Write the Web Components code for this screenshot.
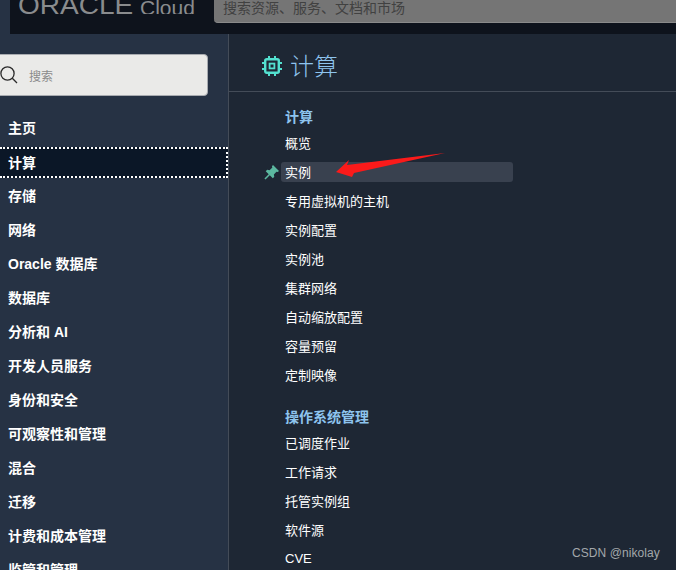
<!DOCTYPE html>
<html lang="zh">
<head>
<meta charset="utf-8">
<title>计算</title>
<style>
  html, body { margin:0; height:100%; overflow:hidden; background:#1e2734; }
  body { font-family:"Liberation Sans","Noto Sans CJK SC",sans-serif; }
</style>
</head>
<body>
<console-shell>
  <top-bar slot="top"></top-bar>
  <side-nav slot="side">
    <nav-row>主页</nav-row>
    <nav-row active>计算</nav-row>
    <nav-row>存储</nav-row>
    <nav-row>网络</nav-row>
    <nav-row>Oracle 数据库</nav-row>
    <nav-row>数据库</nav-row>
    <nav-row>分析和 AI</nav-row>
    <nav-row>开发人员服务</nav-row>
    <nav-row>身份和安全</nav-row>
    <nav-row>可观察性和管理</nav-row>
    <nav-row>混合</nav-row>
    <nav-row>迁移</nav-row>
    <nav-row>计费和成本管理</nav-row>
    <nav-row>监管和管理</nav-row>
  </side-nav>
  <menu-panel slot="main" heading="计算">
    <menu-group title="计算">
      <menu-link>概览</menu-link>
      <menu-link pinned>实例</menu-link>
      <menu-link>专用虚拟机的主机</menu-link>
      <menu-link>实例配置</menu-link>
      <menu-link>实例池</menu-link>
      <menu-link>集群网络</menu-link>
      <menu-link>自动缩放配置</menu-link>
      <menu-link>容量预留</menu-link>
      <menu-link>定制映像</menu-link>
    </menu-group>
    <menu-group title="操作系统管理">
      <menu-link>已调度作业</menu-link>
      <menu-link>工作请求</menu-link>
      <menu-link>托管实例组</menu-link>
      <menu-link>软件源</menu-link>
      <menu-link>CVE</menu-link>
    </menu-group>
  </menu-panel>
  <red-arrow slot="over"></red-arrow>
  <water-mark slot="over">CSDN @nikolay</water-mark>
</console-shell>

<script>
// page frame: top bar over sidebar + main column
class ConsoleShell extends HTMLElement {
  constructor() {
    super();
    this.attachShadow({ mode: 'open' });
    this.shadowRoot.innerHTML = `
      <style>
        :host { display:block; position:relative; width:676px; height:570px; overflow:hidden; background:#1e2734; }
        .top { background:#263244; padding-left:10px; }
        .body { display:flex; height:536px; }
        .side { flex:0 0 228px; width:228px; overflow:hidden; }
        .main { flex:1; min-width:0; border-left:1px solid #444c58; }
      </style>
      <div class="top"><slot name="top"></slot></div>
      <div class="body">
        <div class="side"><slot name="side"></slot></div>
        <div class="main"><slot name="main"></slot></div>
      </div>
      <slot name="over"></slot>
    `;
  }
}

class TopBar extends HTMLElement {
  constructor() {
    super();
    this.attachShadow({ mode: 'open' });
    this.shadowRoot.innerHTML = `
      <style>
        :host { display:flex; height:34px; background:#0e131c; overflow:hidden; }
        .logo { flex:0 0 204px; height:14px; display:flex; align-items:flex-end; color:#8a8c8e; padding-left:8px; box-sizing:border-box; white-space:nowrap; overflow:hidden; }
        .word { font:400 25px/20px "Liberation Sans",sans-serif; width:122px; flex:none; transform:scaleX(1.12); transform-origin:left; position:relative; top:1px; }
        .cloud { font:400 21px/20px "Liberation Sans",sans-serif; position:relative; top:4px; }
        .search { flex:1; height:23px; background:#757575; border-bottom:1px solid #8a8a8a; border-radius:0 0 0 4px; padding-left:9px; font:14px/14px "Noto Sans CJK SC",sans-serif; color:#414141; box-sizing:border-box; }
      </style>
      <div class="logo"><span class="word">ORACLE</span><span class="cloud">Cloud</span></div>
      <div class="search">搜索资源、服务、文档和市场</div>
    `;
  }
}

class SideNav extends HTMLElement {
  constructor() {
    super();
    this.attachShadow({ mode: 'open' });
    this.shadowRoot.innerHTML = `
      <style>
        :host { display:block; height:100%; background:#263244; padding-top:20px; box-sizing:border-box; }
        .box { display:flex; align-items:center; gap:11px; width:218px; height:42px; margin:0 0 15px -10px; padding-left:9px; box-sizing:border-box; background:#eaeae8; border:1px solid #a8abb0; border-radius:4px; font:12px "Noto Sans CJK SC",sans-serif; color:#8b8b8b; }
        svg { width:18px; height:18px; flex:none; }
        .list { display:flex; flex-direction:column; }
      </style>
      <div class="box">
        <svg viewBox="0 0 18 18" fill="none" stroke="#2a2a2a" stroke-width="1.3"><circle cx="7.5" cy="7.5" r="6.6"/><path d="M12.3 12.3 17 17"/></svg>
        <span>搜索</span>
      </div>
      <div class="list"><slot></slot></div>
    `;
  }
}

class NavRow extends HTMLElement {
  constructor() {
    super();
    this.attachShadow({ mode: 'open' });
    this.shadowRoot.innerHTML = `
      <style>
        :host { display:flex; align-items:center; height:34px; padding:0 0 3px 8px; box-sizing:border-box; font:700 14px "Liberation Sans","Noto Sans CJK SC",sans-serif; color:#fff; white-space:nowrap; }
        :host([active]) { height:31px; margin:2px 0 1px; padding-bottom:1px; background:#0b1727; border:2px dotted #fff; border-left:0; }
      </style>
      <slot></slot>
    `;
  }
}

class MenuPanel extends HTMLElement {
  constructor() {
    super();
    this.attachShadow({ mode: 'open' });
    this.shadowRoot.innerHTML = `
      <style>
        :host { display:block; height:100%; overflow:hidden; }
        header { display:flex; align-items:center; gap:8px; height:58px; padding:7px 0 0 33px; box-sizing:border-box; border-bottom:1px solid #444c58; }
        svg { width:20px; height:20px; flex:none; }
        h1 { margin:-3px 0 0; font:300 24px "Noto Sans CJK SC",sans-serif; color:#8ec4ee; }
        .groups { display:flex; flex-direction:column; gap:14px; padding:16px 0 0 56px; }
      </style>
      <header>
        <svg viewBox="0 0 20 20" fill="none" stroke="#53e0cf">
          <rect x="3.2" y="3.2" width="13.6" height="13.6" rx="1.5" stroke-width="2.4"/>
          <rect x="7.6" y="7.6" width="4.8" height="4.8" stroke-width="1.8"/>
          <path stroke-width="2" d="M7 0v3M13 0v3M7 17v3M13 17v3M0 7h3M0 13h3M17 7h3M17 13h3"/>
        </svg>
        <h1></h1>
      </header>
      <div class="groups"><slot></slot></div>
    `;
  }
  connectedCallback() {
    this.shadowRoot.querySelector('h1').textContent = this.getAttribute('heading');
  }
}

class MenuGroup extends HTMLElement {
  constructor() {
    super();
    this.attachShadow({ mode: 'open' });
    this.shadowRoot.innerHTML = `
      <style>
        :host { display:block; }
        h2 { margin:0 0 5px; height:20px; font:700 14px/19px "Liberation Sans","Noto Sans CJK SC",sans-serif; color:#8ec4ee; }
      </style>
      <h2></h2>
      <slot></slot>
    `;
  }
  connectedCallback() {
    this.shadowRoot.querySelector('h2').textContent = this.getAttribute('title');
  }
}

class MenuLink extends HTMLElement {
  constructor() {
    super();
    this.attachShadow({ mode: 'open' });
    this.shadowRoot.innerHTML = `
      <style>
        :host { display:flex; align-items:center; position:relative; width:232px; height:20px; margin:0 0 9px -4px; padding:0 0 2px 4px; box-sizing:border-box; border-radius:3px; font:13px "Liberation Sans","Noto Sans CJK SC",sans-serif; color:#fff; white-space:nowrap; }
        :host([pinned]) { background:#39414f; }
        svg { display:none; position:absolute; left:-17px; top:3px; width:15px; height:15px; }
        :host([pinned]) svg { display:block; }
      </style>
      <svg viewBox="0 0 14 14" fill="#5cb8a0"><path d="M8.4 0 14 5.6 12.8 6.6 11.6 6.2 9.2 8.8 9.6 11 8.2 12.4 5.4 9.6 1.4 13.6 .4 12.6 4.4 8.6 1.6 5.8 3 4.4 5.2 4.8 7.8 2.4 7.4 1.2z"/></svg>
      <slot></slot>
    `;
  }
}

// the red annotation arrow drawn over the menu
class RedArrow extends HTMLElement {
  constructor() {
    super();
    this.attachShadow({ mode: 'open' });
    this.shadowRoot.innerHTML = `
      <style>
        :host { display:block; position:absolute; left:330px; top:148px; width:120px; height:34px; pointer-events:none; }
        svg { display:block; }
      </style>
      <svg width="120" height="34" viewBox="0 0 120 34"><path fill="#fb1a1a" d="M6 24 19 12 17 17 115 5 24 25 22 29z"/></svg>
    `;
  }
}

class WaterMark extends HTMLElement {
  constructor() {
    super();
    this.attachShadow({ mode: 'open' });
    this.shadowRoot.innerHTML = `
      <style>
        :host { display:block; position:absolute; left:572px; top:545px; font:12px/16px "Liberation Sans",sans-serif; letter-spacing:.07px; color:#a3a7ab; white-space:nowrap; }
      </style>
      <slot></slot>
    `;
  }
}

customElements.define('console-shell', ConsoleShell);
customElements.define('top-bar', TopBar);
customElements.define('side-nav', SideNav);
customElements.define('nav-row', NavRow);
customElements.define('menu-panel', MenuPanel);
customElements.define('menu-group', MenuGroup);
customElements.define('menu-link', MenuLink);
customElements.define('red-arrow', RedArrow);
customElements.define('water-mark', WaterMark);
</script>
</body>
</html>
